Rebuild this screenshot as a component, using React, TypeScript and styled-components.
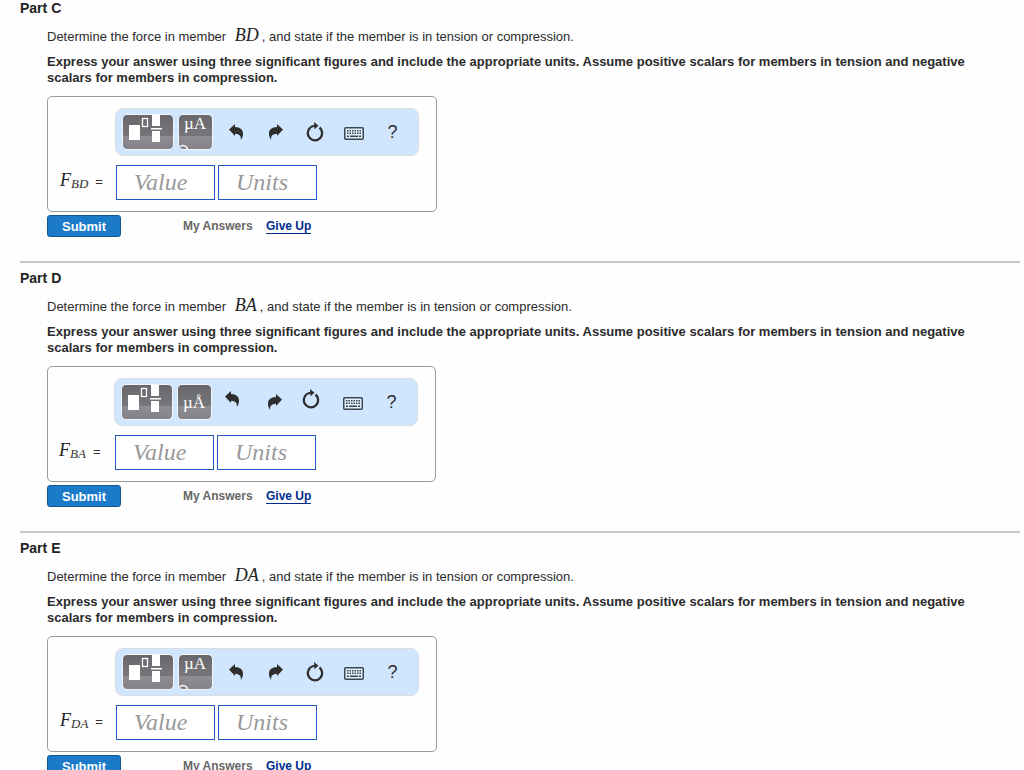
import React from "react";
import styled, { createGlobalStyle } from "styled-components";

const GlobalStyle = createGlobalStyle`
  *, *::before, *::after { box-sizing: border-box; }
  body {
    margin: 0;
    background: #fefefe;
    color: #2b2b2b;
    font-family: "Liberation Sans", Arial, sans-serif;
    font-size: 13px;
    line-height: 16px;
  }
`;

const Page = styled.main`
  height: 100vh;
  overflow: hidden;
  padding: 0 4px 0 20px;
`;

const PartSection = styled.section`
  padding-bottom: 24px;
  & + & {
    border-top: 2px solid #c8c8c8;
    padding-top: 7px;
  }
`;

const PartTitle = styled.h2`
  margin: 0;
  font-size: 14px;
  line-height: 17px;
  color: #222;
`;

const PartBody = styled.div`
  padding: 8px 16px 0 27px;
`;

const Question = styled.p`
  margin: 0;
  line-height: 24px;
`;

const MathText = styled.i`
  font-family: "Liberation Serif", "Times New Roman", serif;
  font-size: 18px;
  line-height: 20px;
  color: #222;
`;

const InlineMath = styled(MathText)`
  margin: 0 3px 0 5px;
`;

const Instructions = styled.p`
  margin: 5px 0 10px;
  font-weight: bold;
`;

const AnswerBox = styled.div<{ $compact?: boolean }>`
  width: ${(p) => (p.$compact ? 389 : 390)}px;
  max-width: 100%;
  padding: 11px 17px 11px ${(p) => (p.$compact ? 66 : 67)}px;
  border: 1px solid #9b9b9b;
  border-radius: 5px;
`;

const Toolbar = styled.div`
  display: flex;
  align-items: center;
  height: 48px;
  padding: 0 6px;
  border: 1px solid #dadde0;
  border-radius: 8px;
  background: #d0e5fe;
`;

const TemplateButton = styled.button<{ $wide?: boolean }>`
  width: ${(p) => (p.$wide ? 52 : 35)}px;
  height: 36px;
  margin-right: 4px;
  padding: 0;
  overflow: hidden;
  border: 1px solid #f4f6fa;
  border-radius: 5px;
  background: linear-gradient(#68686c 0, #77777b 62%, #8e8d94 63%, #838288 100%);
  svg { display: block; }
`;

const ToolButton = styled.button<{ $raised?: boolean }>`
  display: flex;
  align-items: center;
  justify-content: center;
  width: 39px;
  height: 38px;
  padding: ${(p) => (p.$raised ? "0 6px 6px 0" : "0")};
  border: 0;
  background: none;
  color: #2e2e2e;
  font-family: "Liberation Sans", Arial, sans-serif;
  font-size: 18px;
`;

const Fields = styled.div`
  display: flex;
  align-items: center;
  gap: 3px;
  margin: 9px 0 0 -55px;
`;

const FieldLabel = styled.label`
  width: 53px;
  padding-bottom: 4px;
  line-height: 20px;
  color: #333;
  white-space: nowrap;
`;

const Subscript = styled.i`
  font-family: "Liberation Serif", "Times New Roman", serif;
  font-size: 13px;
  line-height: 13px;
  vertical-align: -2px;
`;

const Equals = styled.span`
  margin-left: 7px;
`;

const Field = styled.input`
  width: 99px;
  height: 35px;
  padding: 0 17px;
  border: 1px solid #2459c6;
  background: #fff;
  font: italic 24px "Liberation Serif", "Times New Roman", serif;
  outline: 0;
  &::placeholder { color: #999; opacity: 1; }
`;

const Actions = styled.div`
  display: flex;
  align-items: center;
  margin-top: 3px;
  font-weight: bold;
`;

const SubmitButton = styled.button`
  width: 74px;
  height: 22px;
  margin-right: 62px;
  padding: 0;
  border: 1px solid #14588f;
  border-radius: 3px;
  background: #1c7bc9;
  color: #fff;
  font: bold 13px "Liberation Sans", Arial, sans-serif;
`;

const MyAnswers = styled.span`
  width: 83px;
  color: #666;
  font-size: 12px;
`;

const GiveUp = styled.a`
  color: #002c8f;
  font-size: 12px;
  text-decoration: none;
  line-height: 14px;
  border-bottom: 1px solid #002c8f;
`;

const TemplatesIcon = () => (
  <svg width="50" height="34" aria-hidden="true">
    <rect x="6" y="10" width="11" height="15" fill="#fff" />
    <rect x="19.5" y="3.5" width="5" height="8" fill="none" stroke="#fff" strokeWidth="1.3" />
    <rect x="29" y="0" width="8" height="11" fill="#fff" />
    <rect x="28" y="13" width="11" height="1.5" fill="#fff" />
    <rect x="29" y="16" width="8" height="11" fill="#fff" />
  </svg>
);

const UnitsIcon = ({ compact }: { compact?: boolean }) => (
  <svg width="33" height="34" aria-hidden="true">
    <text
      x="5"
      y={compact ? 23 : 14}
      fill="#fff"
      fontFamily="Liberation Serif, Times New Roman, serif"
      fontSize="17"
    >
      {compact ? "µÅ" : "µA"}
    </text>
    {!compact && <circle cx="4" cy="35" r="4.5" fill="none" stroke="#fff" strokeWidth="1.6" />}
  </svg>
);

const arrowPath =
  "M0 5.500 6 0v3c5.200.2 8.300 2.900 8 7.200-.1 2.200-.9 4.200-2.200 5.800.7-3.900-1.400-6.200-5.800-6.300v2.400z";

const UndoIcon = () => (
  <svg width="15" height="17" aria-hidden="true">
    <path d={arrowPath} fill="currentColor" />
  </svg>
);

const RedoIcon = () => (
  <svg width="15" height="17" aria-hidden="true">
    <path d={arrowPath} fill="currentColor" transform="matrix(-1 0 0 1 15 0)" />
  </svg>
);

const ResetIcon = () => (
  <svg width="18" height="20" viewBox="0 0 18 20" aria-hidden="true">
    <path d="M13.500 5.500A7.200 7.200 0 1 1 4.300 5.600" fill="none" stroke="currentColor" strokeWidth="2.300" />
    <path d="M8 0 12.500 3.800 8.500 7.200z" fill="currentColor" />
    <path d="M4.200 5.600Q6.500 3.700 9.500 3.700" fill="none" stroke="currentColor" strokeWidth="2" />
  </svg>
);

const KeyboardIcon = () => (
  <svg width="20" height="18" viewBox="0 0 20 18" aria-hidden="true">
    <rect x="0.750" y="4.750" width="18.500" height="11.500" rx="1" fill="#e3f1ff" stroke="#3b4650" strokeWidth="1.500" />
    <path d="M3 7.700H17.500M3 10.200H17.500" stroke="#39434b" strokeWidth="1.500" strokeDasharray="1.500 1" />
    <path d="M3 13.300H5M6 13.300H14M15 13.300H17" stroke="#39434b" strokeWidth="1.400" />
  </svg>
);

interface PartProps {
  letter: string;
  member: string;
  compact?: boolean;
}

function Part({ letter, member, compact }: PartProps) {
  const valueId = `value-${letter}`;
  return (
    <PartSection>
      <PartTitle>Part {letter}</PartTitle>
      <PartBody>
        <Question>
          Determine the force in member <InlineMath>{member}</InlineMath>, and state if the member is
          in tension or compression.
        </Question>
        <Instructions>
          Express your answer using three significant figures and include the appropriate units.
          Assume positive scalars for members in tension and negative scalars for members in
          compression.
        </Instructions>
        <AnswerBox $compact={compact}>
          <Toolbar>
            <TemplateButton $wide aria-label="Templates"><TemplatesIcon /></TemplateButton>
            <TemplateButton aria-label="Units and symbols"><UnitsIcon compact={compact} /></TemplateButton>
            <ToolButton $raised={compact} aria-label="Undo"><UndoIcon /></ToolButton>
            <ToolButton aria-label="Redo"><RedoIcon /></ToolButton>
            <ToolButton $raised={compact} aria-label="Reset"><ResetIcon /></ToolButton>
            <ToolButton aria-label="Keyboard"><KeyboardIcon /></ToolButton>
            <ToolButton aria-label="Help">?</ToolButton>
          </Toolbar>
          <Fields>
            <FieldLabel htmlFor={valueId}>
              <MathText>F</MathText>
              <Subscript>{member}</Subscript>
              <Equals>=</Equals>
            </FieldLabel>
            <Field id={valueId} placeholder="Value" />
            <Field aria-label="Units" placeholder="Units" />
          </Fields>
        </AnswerBox>
        <Actions>
          <SubmitButton>Submit</SubmitButton>
          <MyAnswers>My Answers</MyAnswers>
          <GiveUp href="#give-up">Give Up</GiveUp>
        </Actions>
      </PartBody>
    </PartSection>
  );
}

export default function App() {
  return (
    <Page>
      <GlobalStyle />
      <Part letter="C" member="BD" />
      <Part letter="D" member="BA" compact />
      <Part letter="E" member="DA" />
    </Page>
  );
}
